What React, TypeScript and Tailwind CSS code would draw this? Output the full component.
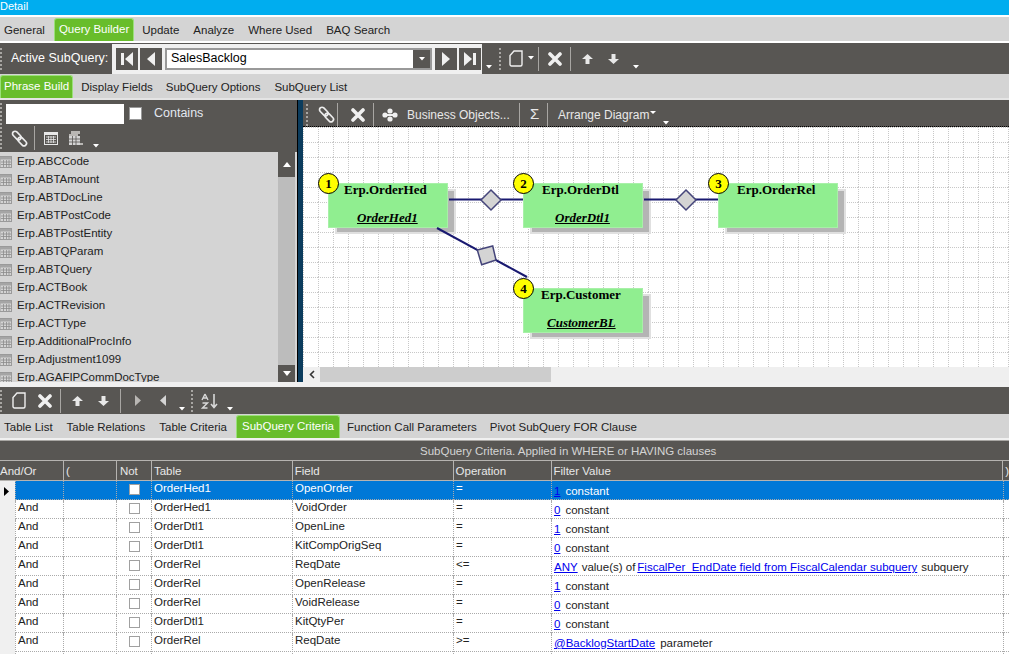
import React from "react";

const tables = [
  "Erp.ABCCode", "Erp.ABTAmount", "Erp.ABTDocLine", "Erp.ABTPostCode", "Erp.ABTPostEntity",
  "Erp.ABTQParam", "Erp.ABTQuery", "Erp.ACTBook", "Erp.ACTRevision", "Erp.ACTType",
  "Erp.AdditionalProcInfo", "Erp.Adjustment1099", "Erp.AGAFIPCommDocType",
];

const rows = [
  { andOr: "", table: "OrderHed1", field: "OpenOrder", op: "=", link: "1", rest: "constant" },
  { andOr: "And", table: "OrderHed1", field: "VoidOrder", op: "=", link: "0", rest: "constant" },
  { andOr: "And", table: "OrderDtl1", field: "OpenLine", op: "=", link: "1", rest: "constant" },
  { andOr: "And", table: "OrderDtl1", field: "KitCompOrigSeq", op: "=", link: "0", rest: "constant" },
  { andOr: "And", table: "OrderRel", field: "ReqDate", op: "<=", link: "", rest: "" },
  { andOr: "And", table: "OrderRel", field: "OpenRelease", op: "=", link: "1", rest: "constant" },
  { andOr: "And", table: "OrderRel", field: "VoidRelease", op: "=", link: "0", rest: "constant" },
  { andOr: "And", table: "OrderDtl1", field: "KitQtyPer", op: "=", link: "0", rest: "constant" },
  { andOr: "And", table: "OrderRel", field: "ReqDate", op: ">=", link: "@BacklogStartDate", rest: "parameter" },
];

const cols = "grid grid-cols-[15px_48px_53px_35px_141px_161px_98px_452px_6px]";

function Grip({ className = "" }: { className?: string }) {
  return <div className={"h-[22px] w-[2px] border-l-2 border-dotted border-[#a8a6a3] " + className} />;
}

function Sep({ className = "" }: { className?: string }) {
  return <div className={"h-[24px] w-px bg-[#a8a6a3] " + className} />;
}

function Drop({ className = "" }: { className?: string }) {
  return (
    <svg width="6" height="4" viewBox="0 0 6 4" className={"mt-[16px] " + className}>
      <path d="M0 0h6L3 3.5z" fill="#fff" />
    </svg>
  );
}

function ChainIcon({ className = "" }: { className?: string }) {
  return (
    <svg width="17" height="17" viewBox="0 0 17 17" fill="none" stroke="#ececec" strokeWidth="1.7" className={className}>
      <rect x="0.8" y="3" width="10" height="5" rx="2.5" transform="rotate(45 5.8 5.5)" />
      <rect x="6.2" y="9" width="10" height="5" rx="2.5" transform="rotate(45 11.2 11.5)" />
    </svg>
  );
}

function CloseIcon({ className = "" }: { className?: string }) {
  return (
    <svg width="14" height="14" viewBox="0 0 14 14" className={className}>
      <path d="M2 2l10 10M12 2 2 12" stroke="#f0f0f0" strokeWidth="3.6" strokeLinecap="round" />
    </svg>
  );
}

function DocIcon({ className = "" }: { className?: string }) {
  return (
    <svg width="14" height="17" viewBox="0 0 14 17" fill="none" className={className}>
      <path d="M5 1h8v13.5a1.5 1.5 0 0 1-1.5 1.5h-9A1.5 1.5 0 0 1 1 14.5V5.5z" stroke="#f0f0f0" strokeWidth="1.4" />
    </svg>
  );
}

function ArrowIcon({ down, className = "" }: { down?: boolean; className?: string }) {
  return (
    <svg width="11" height="10" viewBox="0 0 11 10" className={className}>
      <path d={down ? "M3.5 0h4v5H11L5.5 10 0 5h3.5z" : "M5.5 0 11 5H7.5v5h-4V5H0z"} fill="#e8e8e8" />
    </svg>
  );
}

function NavButton({ dir, end }: { dir: "left" | "right"; end?: boolean }) {
  return (
    <div className="flex h-[22px] w-[22px] items-center justify-center bg-[#585653]">
      <svg width="14" height="14" viewBox="0 0 14 14" fill="#f0f0f0">
        {dir === "left" ? (
          <>
            {end && <rect x="1" y="1" width="3" height="12" />}
            <path d={end ? "M13 0v14L5 7z" : "M11 0v14L3 7z"} />
          </>
        ) : (
          <>
            {end && <rect x="10" y="1" width="3" height="12" />}
            <path d={end ? "M1 0v14l8-7z" : "M3 0v14l8-7z"} />
          </>
        )}
      </svg>
    </div>
  );
}

function CalendarIcon({ className = "" }: { className?: string }) {
  return (
    <svg width="14" height="13" viewBox="0 0 14 13" className={className}>
      <rect x="0.5" y="0.5" width="13" height="12" fill="#585653" stroke="#e8e8e8" />
      <rect x="1" y="1" width="12" height="2" fill="#e8e8e8" />
      <path d="M2 5h10M2 7.5h10M2 10h10M4.5 4v7M7 4v7M9.5 4v7" stroke="#e8e8e8" strokeWidth="0.8" />
    </svg>
  );
}

function ReportIcon({ className = "" }: { className?: string }) {
  return (
    <svg width="16" height="16" viewBox="0 0 16 16" className={className}>
      <path d="M3 1h9v3h-2v2H1V4h2z" fill="#b9b7b4" />
      <rect x="1" y="6" width="11" height="9" fill="#d4d4d4" />
      <path d="M1 9h11M1 12h11M4.5 6v9M8 6v9" stroke="#585653" strokeWidth="0.8" />
      <path d="M12 13h3v2h-3z" fill="#b9b7b4" />
    </svg>
  );
}

function TableIcon() {
  return (
    <svg width="12" height="12" viewBox="0 0 12 12" className="shrink-0">
      <rect x="0" y="0.5" width="11.5" height="11" fill="#d4d4d4" stroke="#9a9a9a" />
      <rect x="0" y="1" width="11" height="2.5" fill="#a5a5a5" />
      <path d="M1 6h10M1 8.5h10M3.5 4v7M6.5 4v7M9 4v7" stroke="#8c8c8c" strokeWidth="0.8" />
    </svg>
  );
}

function Tab({ label, active, className = "" }: { label: string; active?: boolean; className?: string }) {
  if (active) {
    return (
      <div className={"flex h-[23px] items-center self-end rounded-t-[3px] border border-b-0 border-[#9be07a] bg-[#68bd2b] pb-[1px] text-white " + className}>
        {label}
      </div>
    );
  }
  return <div className={"pt-[4px] text-[#222] " + className}>{label}</div>;
}

function Node({ n, title, alias, x, y, tx, ax }: { n: number; title: string; alias?: string; x: number; y: number; tx: number; ax?: number }) {
  return (
    <>
      <div className="absolute h-[41px] w-[117px] bg-[#b4b4b4] shadow-[0_0_0_2px_#e0e0e0]" style={{ left: x + 9, top: y + 8 }} />
      <div className="absolute h-[45px] w-[120px] border border-[#a8f0a8] bg-[#90ee90]" style={{ left: x, top: y }}>
        <div
          className="absolute top-[-2px] text-[13px] font-bold leading-[16px] text-black [font-family:'Liberation_Serif',serif]"
          style={{ left: tx }}
        >
          {title}
        </div>
        {alias && (
          <div
            className="absolute top-[26px] text-[13px] font-bold italic leading-[16px] text-black underline [font-family:'Liberation_Serif',serif]"
            style={{ left: ax }}
          >
            {alias}
          </div>
        )}
      </div>
      <div
        className="absolute flex h-[21px] w-[21px] items-center justify-center rounded-full border border-black bg-[#ffff00] text-[13px] font-bold text-black [font-family:'Liberation_Serif',serif]"
        style={{ left: x - 10, top: y - 10 }}
      >
        {n}
      </div>
    </>
  );
}

export default function App() {
  return (
    <div className="h-[655px] w-[1009px] overflow-hidden bg-white text-[11.5px] [font-family:'Liberation_Sans',Arial,sans-serif]">
      {/* Title bar */}
      <div className="h-[15px] bg-[#00adef] text-[11px] leading-[13px] text-white">Detail</div>

      {/* Top tabs */}
      <div className="mt-[2px] flex h-[24px] items-center bg-[#d4d4d4]">
        <Tab label="General" className="ml-[4px]" />
        <Tab label="Query Builder" active className="ml-[9px] px-[4px]" />
        <Tab label="Update" className="ml-[8px]" />
        <Tab label="Analyze" className="ml-[14px]" />
        <Tab label="Where Used" className="ml-[14px]" />
        <Tab label="BAQ Search" className="ml-[14px]" />
      </div>

      {/* SubQuery toolbar */}
      <div className="mt-[2px] flex h-[31px] items-center bg-[#585653]">
        <Grip className="shrink-0" />
        <div className="ml-[9px] w-[101px] text-[12.5px] text-white">Active SubQuery:</div>
        <div className="flex h-[30px] w-[370px] items-center gap-[2px] bg-[#f0f0f0] pl-[4px]">
          <NavButton dir="left" end />
          <NavButton dir="left" />
          <div className="mx-[1px] flex h-[22px] w-[267px] items-center justify-between border-2 border-[#999] bg-white pl-[4px] text-[12.5px] text-black">
            SalesBacklog
            <div className="flex h-[18px] w-[17px] items-center justify-center bg-[#585653]">
              <svg width="6" height="4" viewBox="0 0 6 4"><path d="M0 0h6L3 3.5z" fill="#fff" /></svg>
            </div>
          </div>
          <NavButton dir="right" />
          <NavButton dir="right" end />
        </div>
        <Drop className="ml-[4px]" />
        <Grip className="ml-[7px]" />
        <DocIcon className="ml-[8px]" />
        <svg width="6" height="4" viewBox="0 0 6 4" className="ml-[5px] mb-[2px]"><path d="M0 0h6L3 3.5z" fill="#fff" /></svg>
        <Sep className="ml-[4px]" />
        <CloseIcon className="ml-[9px]" />
        <Sep className="ml-[8px]" />
        <ArrowIcon className="ml-[11px]" />
        <ArrowIcon down className="ml-[15px]" />
        <Drop className="ml-[14px]" />
      </div>

      {/* Second tabs */}
      <div className="flex h-[24px] items-center bg-[#d4d4d4]">
        <Tab label="Phrase Build" active className="px-[3px]" />
        <Tab label="Display Fields" className="ml-[8px]" />
        <Tab label="SubQuery Options" className="ml-[13px]" />
        <Tab label="SubQuery List" className="ml-[14px]" />
      </div>
      <div className="h-[2px] bg-[#e4e4e4]" />

      {/* Split area */}
      <div className="flex h-[282px] bg-[#d4d4d4]">
        <aside className="flex w-[297px] flex-col">
          <div className="flex h-[27px] shrink-0 items-center bg-[#585653]">
            <Grip className="shrink-0" />
            <div className="ml-[4px] h-[20px] w-[118px] bg-white" />
            <div className="ml-[5px] h-[13px] w-[13px] border border-[#999] bg-white" />
            <div className="ml-[12px] text-[12.5px] text-[#e4e8f0]">Contains</div>
          </div>
          <div className="flex h-[25px] shrink-0 items-center bg-[#585653] pb-[3px]">
            <Grip className="shrink-0" />
            <ChainIcon className="ml-[9px]" />
            <Sep className="ml-[6px]" />
            <CalendarIcon className="ml-[9px]" />
            <ReportIcon className="ml-[10px]" />
            <Drop className="ml-[9px]" />
          </div>
          <div className="flex h-[230px] shrink-0">
            <div className="h-full w-[278px] overflow-hidden pt-[1px]">
              {tables.map((t) => (
                <div key={t} className="flex h-[18px] items-center gap-[5px] text-[#222]">
                  <TableIcon />
                  {t}
                </div>
              ))}
            </div>
            <div className="flex w-[17px] flex-col justify-between bg-[#bcbcbc]">
              <div className="flex h-[25px] items-center justify-center bg-[#585653]">
                <svg width="8" height="5" viewBox="0 0 8 5"><path d="M0 5h8L4 0z" fill="#fff" /></svg>
              </div>
              <div className="flex h-[17px] items-center justify-center bg-[#585653]">
                <svg width="8" height="5" viewBox="0 0 8 5"><path d="M0 0h8L4 5z" fill="#fff" /></svg>
              </div>
            </div>
          </div>
        </aside>
        <div className="h-full w-[6px] shrink-0 border-l border-black bg-[#0b3c5d]" />
        <div className="flex min-w-0 flex-1 flex-col">
          <div className="flex h-[27px] shrink-0 items-center border-b border-dotted border-black bg-[#585653] pt-[3px] text-[12px] text-[#e8e8e8]">
            <Grip className="ml-[3px]" />
            <ChainIcon className="ml-[10px]" />
            <Sep className="ml-[2px]" />
            <CloseIcon className="ml-[13px]" />
            <Sep className="ml-[8px]" />
            <svg width="16" height="14" viewBox="0 0 16 14" className="ml-[8px]" fill="#f0f0f0">
              <circle cx="8" cy="3" r="2.6" />
              <circle cx="3" cy="7" r="2.6" />
              <circle cx="13" cy="7" r="2.6" />
              <circle cx="8" cy="11" r="2.6" />
              <path d="M3 6h10v2H3z" />
            </svg>
            <div className="ml-[9px] w-[103px] whitespace-nowrap">Business Objects...</div>
            <Sep className="ml-[9px]" />
            <div className="ml-[10px] w-[9px] text-[15px]">Σ</div>
            <Sep className="ml-[8px]" />
            <div className="ml-[10px] whitespace-nowrap">Arrange Diagram</div>
            <svg width="6" height="3" viewBox="0 0 6 3" className="mb-[4px] ml-[1px]"><path d="M0 0h6L3 3z" fill="#fff" /></svg>
            <Drop className="ml-[7px]" />
          </div>

          {/* Diagram canvas */}
          <div className="relative h-[255px] overflow-hidden bg-white">
            <svg className="absolute left-0 top-0" width="706" height="255">
              <defs>
                <pattern id="dots" x="0" y="0" width="15" height="15" patternUnits="userSpaceOnUse">
                  <path d="M0.5 0v15M0 0.5h15" stroke="#c8c8c8" strokeWidth="1" strokeDasharray="1 1" />
                </pattern>
              </defs>
              <rect width="706" height="255" fill="url(#dots)" />
            </svg>
            <Node n={1} title="Erp.OrderHed" alias="OrderHed1" x={25} y={56} tx={15} ax={28} />
            <Node n={2} title="Erp.OrderDtl" alias="OrderDtl1" x={220} y={56} tx={18} ax={31} />
            <Node n={3} title="Erp.OrderRel" x={415} y={56} tx={18} />
            <Node n={4} title="Erp.Customer" alias="CustomerBL" x={220} y={161} tx={17} ax={23} />
            <svg className="absolute left-0 top-0" width="706" height="255" fill="none">
              <path d="M146 72.5h74M341 72.5h74" stroke="#191970" strokeWidth="2" />
              <path d="M134 101 224 150" stroke="#191970" strokeWidth="2" />
              <path d="M188 63l10 10-10 10-10-10zM383 63l10 10-10 10-10-10z" fill="#d4d4d4" stroke="#45457a" strokeWidth="1.5" />
              <path d="M189.7 119l3.3 14-14.3 4.7-4.4-14.7z" fill="#d4d4d4" stroke="#45457a" strokeWidth="1.5" />
            </svg>
            <div className="absolute bottom-0 left-0 right-0 flex h-[15px] bg-[#efefef]">
              <div className="flex w-[17px] items-center justify-center">
                <svg width="6" height="9" viewBox="0 0 6 9" fill="none"><path d="M5 1 1.5 4.5 5 8" stroke="#333" strokeWidth="1.6" /></svg>
              </div>
              <div className="w-[231px] bg-[#cdcdcd]" />
            </div>
          </div>
        </div>
      </div>

      {/* Gap under the split area */}
      <div className="h-[5px] bg-[#f0f0f0]" />

      {/* Criteria toolbar */}
      <div className="flex h-[27px] items-center bg-[#585653]">
        <Grip />
        <DocIcon className="ml-[10px]" />
        <CloseIcon className="ml-[12px]" />
        <Sep className="ml-[8px]" />
        <ArrowIcon className="ml-[11px]" />
        <ArrowIcon down className="ml-[15px]" />
        <Sep className="ml-[11px]" />
        <svg width="8" height="11" viewBox="0 0 8 11" className="ml-[13px]"><path d="M1 0l6 5.5L1 11z" fill="#b9b7b4" /></svg>
        <svg width="8" height="11" viewBox="0 0 8 11" className="ml-[17px]"><path d="M7 0 1 5.5 7 11z" fill="#d4d4d4" /></svg>
        <Drop className="ml-[12px]" />
        <Grip className="ml-[6px]" />
        <svg width="18" height="16" viewBox="0 0 18 16" className="ml-[8px]" fill="none" stroke="#d8d8d8">
          <path d="M4 1 1 7M4 1l3 6M2 5h4M1.5 10h5l-5 5h5" strokeWidth="1.4" />
          <path d="M13 1v13M10 11l3 3.5 3-3.5" strokeWidth="1.6" />
        </svg>
        <Drop className="ml-[8px]" />
      </div>

      {/* Lower tabs */}
      <div className="flex h-[24px] items-center bg-[#d4d4d4]">
        <Tab label="Table List" className="ml-[4px]" />
        <Tab label="Table Relations" className="ml-[14px]" />
        <Tab label="Table Criteria" className="ml-[14px]" />
        <Tab label="SubQuery Criteria" active className="ml-[9px] px-[5px]" />
        <Tab label="Function Call Parameters" className="ml-[7px]" />
        <Tab label="Pivot SubQuery FOR Clause" className="ml-[13px]" />
      </div>
      <div className="h-[3px] border-b border-[#a8a6a3] bg-[#f0f0f0]" />

      {/* Grid caption */}
      <div className="h-[20px] border-b border-[#b5b3b0] bg-[#585653] pl-[420px] leading-[21px] text-[#d4d4d4]">
        SubQuery Criteria. Applied in WHERE or HAVING clauses
      </div>

      {/* Grid header */}
      <div className="flex h-[20px] border-b border-[#b5b3b0] bg-[#585653] leading-[21px] text-[#e8e8e8]">
        <div className="w-[64px] border-r border-[#b5b3b0]">And/Or</div>
        <div className="w-[53px] border-r border-[#b5b3b0] pl-[2px]">(</div>
        <div className="w-[35px] border-r border-[#b5b3b0] pl-[3px]">Not</div>
        <div className="w-[141px] border-r border-[#b5b3b0] pl-[2px]">Table</div>
        <div className="w-[161px] border-r border-[#b5b3b0] pl-[2px]">Field</div>
        <div className="w-[98px] border-r border-[#b5b3b0] pl-[2px]">Operation</div>
        <div className="w-[452px] border-r border-[#b5b3b0] pl-[2px]">Filter Value</div>
        <div className="pl-[2px]">)</div>
      </div>

      {/* Grid rows */}
      {rows.map((r, i) => {
        const sel = i === 0;
        const linkCls = "text-[#0000ee] underline";
        return (
          <div
            key={i}
            className={cols + " h-[19px] border-b border-dotted border-[#aaa] " + (sel ? "bg-[#0078d7] text-white" : "bg-white text-[#222]")}
          >
            <div className="flex items-center bg-[#f0f0f0] pl-[4px]">
              {sel && <svg width="5" height="9" viewBox="0 0 5 9"><path d="M0 0l5 4.5L0 9z" fill="#000" /></svg>}
            </div>
            <div className="border-l border-dotted border-[#aaa] pl-[2px] leading-[15px]">{r.andOr}</div>
            <div className="border-l border-dotted border-[#aaa]" />
            <div className="flex items-start justify-center border-l border-dotted border-[#aaa] pt-[3px]">
              <div className="h-[11px] w-[11px] border border-[#a0a0a0] bg-white" />
            </div>
            <div className="border-l border-dotted border-[#aaa] pl-[2px] leading-[15px]">{r.table}</div>
            <div className="border-l border-dotted border-[#aaa] pl-[2px] leading-[15px]">{r.field}</div>
            <div className="border-l border-dotted border-[#aaa] pl-[2px] leading-[15px]">{r.op}</div>
            <div className="whitespace-nowrap border-l border-dotted border-[#aaa] pl-[2px] leading-[21px]">
              {r.link ? (
                <>
                  <span className={linkCls}>{r.link}</span>
                  <span className="ml-[5px]">{r.rest}</span>
                </>
              ) : (
                <>
                  <span className={linkCls}>ANY</span>
                  <span className="ml-[4px]">value(s) of</span>
                  <span className={linkCls + " ml-[2px]"}>FiscalPer_EndDate field from FiscalCalendar subquery</span>
                  <span className="ml-[4px]">subquery</span>
                </>
              )}
            </div>
            <div className="border-l border-dotted border-[#aaa]" />
          </div>
        );
      })}
    </div>
  );
}
